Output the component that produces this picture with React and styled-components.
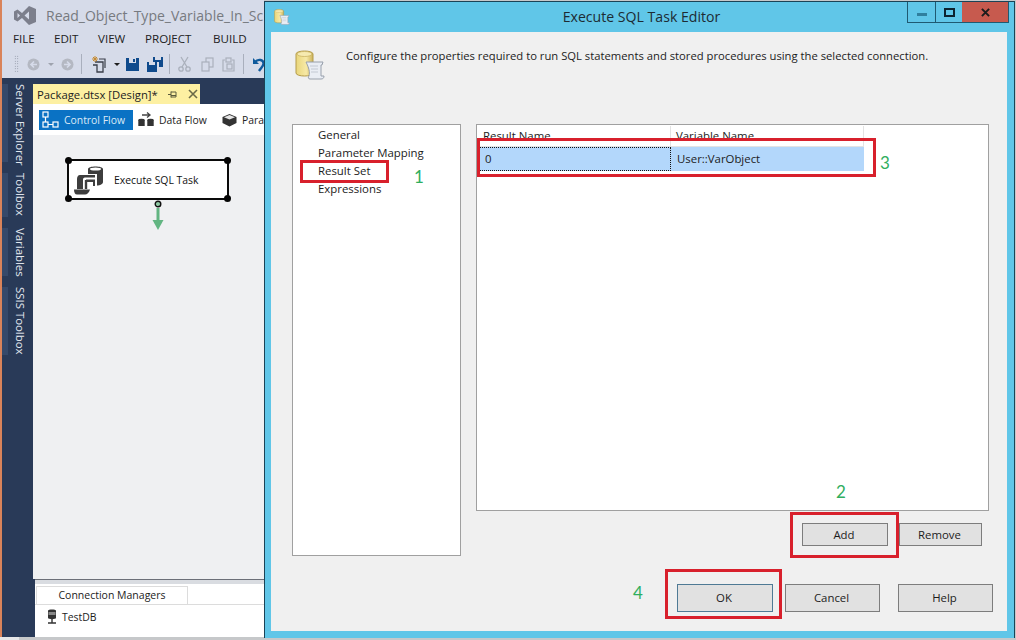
import React from "react";
import styled, { createGlobalStyle } from "styled-components";

const Global = createGlobalStyle`
  html, body { margin: 0; padding: 0; background: #fff; }
  * { box-sizing: border-box; }
  svg { flex: none; }
`;

const UI = `"Open Sans", "Noto Sans", "Liberation Sans", sans-serif`;

const Page = styled.div`
  position: relative;
  display: flex;
  align-items: flex-start;
  width: 1016px;
  height: 640px;
  overflow: hidden;
  background: linear-gradient(90deg, #e6e7e8 19px, #c6c8ca 19px);
  font-family: ${UI};
  font-size: 11.4px;
  color: #1c1c1c;
`;

/* ---- visual studio side ---- */
const Ide = styled.div`
  display: flex;
  flex-direction: column;
  width: 264px;
  height: 637px;
  flex: none;
  border-left: 2px solid #d9835a;
`;
const Chrome = styled.div`
  height: 78px;
  flex: none;
  background: #d6dbe9;
`;
const TitleRow = styled.div`
  display: flex;
  align-items: center;
  height: 31px;
  padding: 0 0 0 12px;
  overflow: hidden;
  white-space: nowrap;
`;
const IdeTitle = styled.span`
  margin-left: 10px;
  font-size: 14px;
  color: #777a80;
`;
const Menu = styled.div`
  display: flex;
  height: 17px;
  align-items: center;
  padding: 0 0 2px 11px;
  font-size: 11.6px;
  color: #222;
`;
const MenuItem = styled.span`
  width: ${p => p.$w}px;
  flex: none;
`;
const Toolbar = styled.div`
  display: flex;
  align-items: center;
  height: 30px;
  padding: 2px 0 0 12px;
  overflow: hidden;
`;
const Grip = styled.div`
  width: 5px;
  height: 18px;
  margin-right: 7px;
  flex: none;
  background-image: radial-gradient(#7f8695 0.7px, transparent 0.8px);
  background-size: 2.5px 2.5px;
`;
const ToolSlot = styled.div`
  display: flex;
  justify-content: center;
  align-items: center;
  flex: none;
  width: ${p => p.$w}px;
  height: 18px;
  margin-left: ${p => p.$ml || 0}px;
`;
const ToolSep = styled.div`
  width: 1px;
  height: 20px;
  flex: none;
  margin: 0 ${p => p.$after || 6}px 0 ${p => p.$before || 6}px;
  background: #a9afbd;
`;
const Caret = styled.div`
  width: 0;
  height: 0;
  border-left: 3px solid transparent;
  border-right: 3px solid transparent;
  border-top: 3px solid ${p => p.$color || "#1e1e1e"};
`;

const IdeBody = styled.div`
  display: flex;
  flex: 1;
  min-height: 0;
  background: #293a58;
`;
const Sidebar = styled.div`
  display: flex;
  flex-direction: column;
  gap: 11px;
  width: 31px;
  flex: none;
  padding-top: 6px;
`;
const SideTab = styled.div`
  display: flex;
  align-items: center;
  height: ${p => p.$h}px;
  padding-right: 0;
  border-left: 6px solid #35496a;
  writing-mode: vertical-rl;
  white-space: nowrap;
  font-size: 11.4px;
  color: #e3e8f0;
`;
const Doc = styled.div`
  display: flex;
  flex-direction: column;
  flex: 1;
  min-width: 0;
  padding-top: 6px;
`;
const DocTab = styled.div`
  display: flex;
  align-items: center;
  width: 167px;
  height: 20px;
  flex: none;
  padding-left: 4px;
  background: #fdf0a2;
  font-size: 11.3px;
  color: #222;
  white-space: nowrap;
`;
const DocTabIcons = styled.div`
  display: flex;
  align-items: center;
  gap: 11px;
  margin-left: 10px;
`;
const DesignTabs = styled.div`
  display: flex;
  align-items: center;
  height: 31px;
  flex: none;
  padding-left: 6px;
  background: #fff;
  overflow: hidden;
  white-space: nowrap;
`;
const DesignTab = styled.div`
  display: flex;
  align-items: center;
  flex: none;
  gap: 5px;
  height: 20px;
  width: ${p => p.$w}px;
  padding-left: ${p => p.$pad || 3}px;
  font-size: 10.4px;
  background: ${p => (p.$active ? "#0a72c4" : "transparent")};
  color: ${p => (p.$active ? "#dbeaf7" : "#222")};
`;
const Canvas = styled.div`
  position: relative;
  flex: 1;
  min-height: 0;
  background: #eff0f2;
`;
const TaskNode = styled.div`
  position: absolute;
  left: 34px;
  top: 24px;
  display: flex;
  align-items: center;
  width: 162px;
  height: 41px;
  padding-left: 5px;
  background: #fff;
  border: 2px solid #0a0a0a;
  border-radius: 2px;
  font-size: 10.4px;
  color: #111;
`;
const TaskLabel = styled.span`
  margin-left: 10px;
`;
const Handle = styled.span`
  position: absolute;
  width: 7px;
  height: 7px;
  border-radius: 50%;
  background: #050505;
  ${p => (p.$top ? "top: -4px;" : "bottom: -4px;")}
  ${p => (p.$left ? "left: -4px;" : "right: -4px;")}
`;
const Connector = styled.svg`
  position: absolute;
  left: 119px;
  top: 65px;
`;
const Splitter = styled.div`
  height: 5px;
  flex: none;
  margin-left: 2px;
  border-top: 1px solid #6b6f78;
  background: #d9dce1;
`;
const Managers = styled.div`
  height: 53px;
  flex: none;
  margin-left: 2px;
  padding: 2px 0 0 1px;
  background: #fff;
`;
const ManagerTab = styled.div`
  display: flex;
  align-items: center;
  justify-content: center;
  width: 152px;
  height: 18px;
  padding-bottom: 2px;
  border: 1px solid #dcdcdc;
  border-bottom: none;
  font-size: 10.5px;
  color: #222;
`;
const ManagerRow = styled.div`
  display: flex;
  align-items: center;
  gap: 5px;
  height: 26px;
  margin-left: -1px;
  padding: 0 0 2px 12px;
  border-top: 1px solid #dcdcdc;
  font-size: 10.4px;
`;

/* ---- dialog ---- */
const Dialog = styled.div`
  display: flex;
  flex-direction: column;
  width: 751px;
  height: 637px;
  flex: none;
  margin-top: 1px;
  border: 1px solid #1b4356;
  border-bottom: none;
  background: #60c6e8;
`;
const Caption = styled.div`
  display: grid;
  grid-template-columns: 1fr auto 1fr;
  height: 30px;
  flex: none;
  padding: 0 5px 0 9px;
`;
const CaptionIcon = styled.div`
  display: flex;
  align-items: center;
  padding-bottom: 1px;
`;
const CaptionTitle = styled.div`
  align-self: center;
  padding-bottom: 2px;
  font-size: 14.1px;
  color: #1d2b33;
`;
const WindowButtons = styled.div`
  display: flex;
  justify-self: end;
  height: 21px;
  border: 1px solid #1f5a72;
  border-top: none;
`;
const WindowButton = styled.div`
  display: flex;
  align-items: ${p => (p.$low ? "flex-end" : "center")};
  justify-content: center;
  width: ${p => p.$w}px;
  padding-bottom: ${p => (p.$low ? 6 : 0)}px;
  background: ${p => p.$bg || "transparent"};
  border-left: ${p => (p.$divider ? "1px solid #1f5a72" : "none")};
`;
const Client = styled.div`
  display: flex;
  flex-direction: column;
  height: 599px;
  margin: 0 7px 0 6px;
  background: #f0f0f0;
`;
const Intro = styled.div`
  display: flex;
  height: 92px;
  flex: none;
  padding: 18px 0 0 24px;
`;
const IntroText = styled.div`
  margin-left: 21px;
  font-size: 11.25px;
  line-height: 12px;
  white-space: nowrap;
`;
const Main = styled.div`
  display: flex;
  gap: 15px;
  height: 432px;
  flex: none;
  padding-left: 21px;
`;
const NavList = styled.div`
  display: flex;
  flex-direction: column;
  width: 169px;
  padding: 1px 0 0 25px;
  background: #fff;
  border: 1px solid #a0a0a0;
`;
const NavItem = styled.div`
  height: 18px;
  line-height: 18px;
`;
const ResultColumn = styled.div`
  display: flex;
  flex-direction: column;
  width: 513px;
`;
const Grid = styled.div`
  height: 387px;
  flex: none;
  padding: 1px;
  background: #fff;
  border: 1px solid #a0a0a0;
`;
const GridRow = styled.div`
  display: grid;
  grid-template-columns: 193px 193px;
  height: ${p => p.$h}px;
`;
const HeadCell = styled.div`
  display: flex;
  align-items: center;
  height: 100%;
  padding: 0 0 2px 5px;
  background: #fff;
  border-right: 1px solid #e3e3e3;
  border-bottom: 1px solid #e3e3e3;
`;
const ValueCell = styled.div`
  display: flex;
  align-items: center;
  padding: 0 0 1px ${p => (p.$focus ? 7 : 6)}px;
  background: #b3d7fb;
  outline: ${p => (p.$focus ? "1px dotted #111" : "none")};
  outline-offset: -1px;
`;
const GridActions = styled.div`
  display: flex;
  justify-content: flex-end;
  gap: 11px;
  margin-top: 12px;
  padding-right: 7px;
`;
const Button = styled.div`
  display: flex;
  align-items: center;
  justify-content: center;
  width: ${p => p.$w}px;
  height: ${p => p.$h}px;
  padding: 0 2px 1px 0;
  background: #e1e1e1;
  border: 1px solid ${p => (p.$primary ? "#4f7a95" : "#7d7d7d")};
  color: #1c1c1c;
`;
const Footer = styled.div`
  display: flex;
  justify-content: flex-end;
  margin-top: 28px;
  padding-right: 14px;
`;
const FooterSlot = styled.div`
  margin-left: ${p => p.$ml}px;
`;

/* ---- annotations drawn over the screenshot ---- */
const RedBox = styled.div`
  position: absolute;
  left: ${p => p.$x}px;
  top: ${p => p.$y}px;
  width: ${p => p.$w}px;
  height: ${p => p.$h}px;
  border: 3px solid #d8202c;
`;
const Mark = styled.span`
  position: absolute;
  left: ${p => p.$x}px;
  top: ${p => p.$y}px;
  font-family: "Lato", sans-serif;
  font-size: 17px;
  line-height: 20px;
  color: #2fae5e;
`;

/* ---- drawings ---- */
const VsLogo = () => (
  <svg width="22" height="19" viewBox="0 0 22 19">
    <path fillRule="evenodd" fill="#7c7f8c" d="M15 0 L22 3 V16 L15 19 L8 12 L3.5 15.5 L0 13.5 V5.5 L3.5 3.5 L8 7 Z M15 5.5 L10.5 9.5 L15 13.5 Z M3.5 7 V12 L6 9.5 Z" />
  </svg>
);
const NavCircle = ({ flip }) => (
  <svg width="13" height="13" viewBox="0 0 13 13" style={{ transform: flip ? "scaleX(-1)" : "none" }}>
    <circle cx="6.5" cy="6.5" r="6" fill="#b4b8c2" />
    <path d="M7 3.5 L4 6.5 L7 9.5 M4.5 6.5 H10" stroke="#d6dbe9" strokeWidth="1.7" fill="none" />
  </svg>
);
const NewProject = () => (
  <svg width="14" height="17" viewBox="0 0 14 17">
    <path d="M3 6 H11 V16 H5 V9 H1" fill="none" stroke="#3a3f4a" strokeWidth="1.3" />
    <path d="M7 3 H13 V12" fill="none" stroke="#3a3f4a" strokeWidth="1.2" />
    <path d="M1 1 L5 5 M5 1 L1 5 M3 0 V6 M0 3 H6" stroke="#c5892f" strokeWidth="1" />
  </svg>
);
const SaveOne = () => (
  <svg width="13" height="13" viewBox="0 0 13 13">
    <path fillRule="evenodd" fill="#0f4a8c" d="M0 0 H13 V13 H0 Z M3 0 V5 H10 V0 Z" />
    <rect x="7" y="1" width="2" height="3" fill="#0f4a8c" />
  </svg>
);
const SaveAll = () => (
  <svg width="16" height="15" viewBox="0 0 16 15">
    <path fillRule="evenodd" fill="#0f4a8c" d="M6 0 H16 V10 H12 V5 H6 Z M8 0 V3 H14 V0 Z" />
    <path fillRule="evenodd" fill="#0f4a8c" d="M0 5 H10 V15 H0 Z M2 5 V8 H8 V5 Z" />
  </svg>
);
const Cut = () => (
  <svg width="13" height="16" viewBox="0 0 13 16" fill="none" stroke="#aab0bc" strokeWidth="1.3">
    <circle cx="3" cy="13" r="2.2" />
    <circle cx="10" cy="13" r="2.2" />
    <path d="M4 11 L10 1 M9 11 L3 1" />
  </svg>
);
const CopyIcon = () => (
  <svg width="13" height="15" viewBox="0 0 13 15" fill="none" stroke="#aab0bc" strokeWidth="1.2">
    <rect x="5" y="1" width="7" height="9" />
    <rect x="1" y="5" width="7" height="9" fill="#d6dbe9" />
  </svg>
);
const PasteIcon = () => (
  <svg width="13" height="15" viewBox="0 0 13 15" fill="none" stroke="#aab0bc" strokeWidth="1.2">
    <path d="M3 3 H1 V14 H12 V3 H10" />
    <rect x="4" y="1" width="5" height="4" />
    <rect x="5" y="7" width="5" height="5" />
  </svg>
);
const Undo = () => (
  <svg width="12" height="15" viewBox="0 0 12 15" fill="none">
    <path d="M2 5 C5 1.5 11 2.5 10.5 7 C10.3 9 8 11 6 14" stroke="#0f5a9c" strokeWidth="2.4" />
    <path d="M0 1 V7 H6 Z" fill="#0f5a9c" />
  </svg>
);
const Pin = () => (
  <svg width="9" height="9" viewBox="0 0 9 9" fill="none" stroke="#5a5a3c" strokeWidth="1">
    <path d="M0 4.5 H3 M3 1.5 V7.5 M3 2 H8 V7 H3 M3 5.5 H8" />
  </svg>
);
const CloseX = ({ color = "#6b6a48", size = 10, weight = 1.6 }) => (
  <svg width={size} height={size} viewBox="0 0 10 10">
    <path d="M1 1 L9 9 M9 1 L1 9" stroke={color} strokeWidth={weight} />
  </svg>
);
const ControlFlowIcon = () => (
  <svg width="17" height="17" viewBox="0 0 17 17" fill="none" stroke="#fff" strokeWidth="1.2">
    <rect x="1" y="1" width="5" height="5" />
    <rect x="1" y="11" width="5" height="5" />
    <rect x="11" y="11" width="5" height="5" />
    <path d="M3.5 6 V11 M6 13.5 H11" />
  </svg>
);
const DataFlowIcon = () => (
  <svg width="16" height="15" viewBox="0 0 16 15">
    <ellipse cx="3.5" cy="8" rx="3.2" ry="1.3" fill="#333" />
    <rect x="0.3" y="8" width="6.4" height="6" fill="#333" />
    <ellipse cx="12.5" cy="8" rx="3.2" ry="1.3" fill="#333" />
    <rect x="9.3" y="8" width="6.4" height="6" fill="#333" />
    <path d="M4 3 H11 M9 0.5 L12 3 L9 5.5" fill="none" stroke="#444" strokeWidth="1.3" />
  </svg>
);
const ParamIcon = () => (
  <svg width="15" height="14" viewBox="0 0 15 14">
    <path d="M7.5 1 L14.5 4 V10 L7.5 13.5 L0.5 10 V4 Z" fill="#333" />
    <path d="M7.5 2 L13 4.2 L7.5 6.5 L2 4.2 Z" fill="#e6e6e6" />
  </svg>
);
const SqlTaskIcon = () => (
  <svg width="30" height="30" viewBox="0 0 30 30">
    <path d="M14 4 C14 0.5 29 0.5 29 4 V17 C29 19 26 20.5 23 20.5 V9 H14 Z" fill="#3d3d3d" />
    <ellipse cx="21.5" cy="4" rx="5.5" ry="1.5" fill="#fff" />
    <path d="M6 10 H21 V12.5 H11 C9.5 12.5 9 13.5 9 14.5 V24 H3 V14 C3 12 4 10 6 10 Z" fill="#3d3d3d" />
    <path d="M12 14.5 H21 V21 H19 V17 H12 Z" fill="#3d3d3d" />
    <path d="M0 24.5 H16 C15 28 13 29.5 11 29.5 H3 C1 29.5 0 27.5 0 24.5 Z" fill="#3d3d3d" />
    <path d="M12 15 V24" stroke="#3d3d3d" strokeWidth="2.4" />
  </svg>
);
const DbPin = () => (
  <svg width="10" height="16" viewBox="0 0 10 16">
    <path d="M1 1.5 C1 0 9 0 9 1.5 V9 C9 10.5 1 10.5 1 9 Z" fill="#333" />
    <path d="M1.5 3 H8.5 V6 H1.5 Z" fill="#888" />
    <path d="M5 10 V14 M1 14 H9" stroke="#333" strokeWidth="1.4" />
  </svg>
);
const SqlEditorIcon = ({ size, id }) => (
  <svg width={size} height={size} viewBox="0 0 30 30">
    <defs>
      <linearGradient id={id} x1="0" x2="1" y1="0" y2="0">
        <stop offset="0" stopColor="#e9d67a" />
        <stop offset="0.6" stopColor="#f7e9a6" />
        <stop offset="1" stopColor="#cdb35a" />
      </linearGradient>
    </defs>
    <path d="M1 4 C1 0 18 0 18 4 V23 C18 27 1 27 1 23 Z" fill={`url(#${id})`} stroke="#b59c4a" strokeWidth="1" />
    <ellipse cx="9.5" cy="4" rx="7.5" ry="2.5" fill="#f6eab0" stroke="#c4ac5c" strokeWidth="0.7" />
    <path d="M11 12 H28 L27 15 H26 V26 H29 C29 28 28 29 26 29 H15 C13 29 13 27 14 26 C15 22 14 18 11 12 Z" fill="#e9edf4" stroke="#98a0ac" strokeWidth="1" />
    <path d="M15 16 H23 M16 19 H23 M16 22 H23" stroke="#b9c0cb" strokeWidth="0.8" />
  </svg>
);

export default function App() {
  return (
    <Page>
      <Global />
      <Ide>
        <Chrome>
          <TitleRow>
            <VsLogo />
            <IdeTitle>Read_Object_Type_Variable_In_Sc</IdeTitle>
          </TitleRow>
          <Menu>
            <MenuItem $w={41}>FILE</MenuItem>
            <MenuItem $w={44}>EDIT</MenuItem>
            <MenuItem $w={47}>VIEW</MenuItem>
            <MenuItem $w={68}>PROJECT</MenuItem>
            <MenuItem $w={40}>BUILD</MenuItem>
          </Menu>
          <Toolbar>
            <Grip />
            <ToolSlot $w={15}><NavCircle /></ToolSlot>
            <ToolSlot $w={19}><Caret $color="#9ea3ae" /></ToolSlot>
            <ToolSlot $w={15}><NavCircle flip /></ToolSlot>
            <ToolSep $before={6} $after={9} />
            <ToolSlot $w={16}><NewProject /></ToolSlot>
            <ToolSlot $w={19}><Caret /></ToolSlot>
            <ToolSlot $w={13}><SaveOne /></ToolSlot>
            <ToolSlot $w={16} $ml={8}><SaveAll /></ToolSlot>
            <ToolSep $before={6} $after={8} />
            <ToolSlot $w={13}><Cut /></ToolSlot>
            <ToolSlot $w={13} $ml={10}><CopyIcon /></ToolSlot>
            <ToolSlot $w={13} $ml={8}><PasteIcon /></ToolSlot>
            <ToolSep $before={8} $after={9} />
            <ToolSlot $w={12}><Undo /></ToolSlot>
          </Toolbar>
        </Chrome>
        <IdeBody>
          <Sidebar>
            <SideTab $h={78}>Server Explorer</SideTab>
            <SideTab $h={44}>Toolbox</SideTab>
            <SideTab $h={48}>Variables</SideTab>
            <SideTab $h={68}>SSIS Toolbox</SideTab>
          </Sidebar>
          <Doc>
            <DocTab>
              Package.dtsx [Design]*
              <DocTabIcons>
                <Pin />
                <CloseX />
              </DocTabIcons>
            </DocTab>
            <DesignTabs>
              <DesignTab $active $w={94}><ControlFlowIcon />Control Flow</DesignTab>
              <DesignTab $w={85} $pad={5}><DataFlowIcon />Data Flow</DesignTab>
              <DesignTab $w={80} $pad={4}><ParamIcon />Parameters</DesignTab>
            </DesignTabs>
            <Canvas>
              <TaskNode>
                <SqlTaskIcon />
                <TaskLabel>Execute SQL Task</TaskLabel>
                <Handle $top $left />
                <Handle $top />
                <Handle $left />
                <Handle />
              </TaskNode>
              <Connector width="12" height="32" viewBox="0 0 12 32">
                <path d="M6 8 V24" stroke="#62b582" strokeWidth="3" />
                <path d="M0.5 20 H11.5 L6 30 Z" fill="#62b582" />
                <circle cx="6" cy="4" r="2.8" fill="#8fc9a4" stroke="#111" strokeWidth="1.4" />
              </Connector>
            </Canvas>
            <Splitter />
            <Managers>
              <ManagerTab>Connection Managers</ManagerTab>
              <ManagerRow><DbPin />TestDB</ManagerRow>
            </Managers>
          </Doc>
        </IdeBody>
      </Ide>

      <Dialog>
        <Caption>
          <CaptionIcon><SqlEditorIcon size={16} id="capGrad" /></CaptionIcon>
          <CaptionTitle>Execute SQL Task Editor</CaptionTitle>
          <WindowButtons>
            <WindowButton $w={27} $low>
              <svg width="10" height="3"><rect width="10" height="3" fill="#2f7f9e" /></svg>
            </WindowButton>
            <WindowButton $w={27} $divider>
              <svg width="11" height="9"><rect x="1" y="1" width="9" height="7" fill="none" stroke="#0d2330" strokeWidth="2" /></svg>
            </WindowButton>
            <WindowButton $w={46} $bg="#c75a4e">
              <CloseX color="#1c1c1c" size={9} weight={2.2} />
            </WindowButton>
          </WindowButtons>
        </Caption>
        <Client>
          <Intro>
            <SqlEditorIcon size={30} id="bigGrad" />
            <IntroText>Configure the properties required to run SQL statements and stored procedures using the selected connection.</IntroText>
          </Intro>
          <Main>
            <NavList>
              <NavItem>General</NavItem>
              <NavItem>Parameter Mapping</NavItem>
              <NavItem>Result Set</NavItem>
              <NavItem>Expressions</NavItem>
            </NavList>
            <ResultColumn>
              <Grid>
                <GridRow $h={21}>
                  <HeadCell>Result Name</HeadCell>
                  <HeadCell>Variable Name</HeadCell>
                </GridRow>
                <GridRow $h={24}>
                  <ValueCell $focus>0</ValueCell>
                  <ValueCell>User::VarObject</ValueCell>
                </GridRow>
              </Grid>
              <GridActions>
                <Button $w={86} $h={23}>Add</Button>
                <Button $w={83} $h={23}>Remove</Button>
              </GridActions>
            </ResultColumn>
          </Main>
          <Footer>
            <Button $primary $w={96} $h={28}>OK</Button>
            <FooterSlot $ml={12}><Button $w={95} $h={28}>Cancel</Button></FooterSlot>
            <FooterSlot $ml={18}><Button $w={95} $h={28}>Help</Button></FooterSlot>
          </Footer>
        </Client>
      </Dialog>

      <RedBox $x={300} $y={160} $w={89} $h={23} />
      <RedBox $x={477} $y={138} $w={399} $h={39} />
      <RedBox $x={790} $y={512} $w={109} $h={46} />
      <RedBox $x={665} $y={569} $w={117} $h={50} />
      <Mark $x={414} $y={167}>1</Mark>
      <Mark $x={880} $y={153}>3</Mark>
      <Mark $x={836} $y={482}>2</Mark>
      <Mark $x={633} $y={583}>4</Mark>
    </Page>
  );
}
